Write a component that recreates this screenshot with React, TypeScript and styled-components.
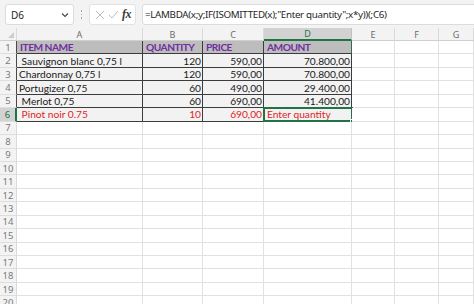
import React from 'react';
import styled, { createGlobalStyle } from 'styled-components';

const GlobalStyle = createGlobalStyle`
  html, body {
    margin: 0;
    padding: 0;
    background: #ffffff;
    overflow: hidden;
  }
  * {
    box-sizing: border-box;
  }
`;

const COLS = ['A', 'B', 'C', 'D', 'E', 'F', 'G'];
const COL_WIDTHS = '17px 126px 60px 61px 88px 43px 44px 1fr';
const ROW_H = 13.45;

type Row = { cells: string[]; kind: 'head' | 'data' | 'alert' };

const rows: Row[] = [
  { kind: 'head', cells: ['ITEM NAME', 'QUANTITY', 'PRICE', 'AMOUNT'] },
  { kind: 'data', cells: [' Sauvignon blanc 0,75 l', '120', '590,00', '70.800,00'] },
  { kind: 'data', cells: ['Chardonnay 0,75 l', '120', '590,00', '70.800,00'] },
  { kind: 'data', cells: ['Portugizer 0,75', '60', '490,00', '29.400,00'] },
  { kind: 'data', cells: [' Merlot 0,75', '60', '690,00', '41.400,00'] },
  { kind: 'alert', cells: [' Pinot noir 0.75', '10', '690,00', 'Enter quantity'] },
];

const Page = styled.div`
  width: 100%;
  height: 304px;
  display: flex;
  flex-direction: column;
  background: #f3f3f3;
`;

const FormulaBar = styled.div`
  height: 28px;
  flex: none;
  display: flex;
  align-items: center;
  padding: 1px 0 0 5px;
  font-family: 'Noto Sans', 'Open Sans', sans-serif;
  color: #262626;
`;

const NameBox = styled.div`
  width: 69px;
  height: 21px;
  background: #ffffff;
  border: 1px solid #dcdcdc;
  border-radius: 3px;
  display: flex;
  align-items: center;
  justify-content: space-between;
  padding: 0 4px 0 5px;
  font-size: 10px;
`;

const Grip = styled.div`
  width: 15px;
  display: flex;
  flex-direction: column;
  align-items: center;
  gap: 2px;

  span {
    width: 1.5px;
    height: 1.5px;
    border-radius: 50%;
    background: #9a9a9a;
  }
`;

const ActionBox = styled.div`
  width: 47px;
  height: 21px;
  background: #ffffff;
  border: 1px solid #e2e2e2;
  border-radius: 3px;
  display: flex;
  align-items: center;
  justify-content: space-between;
  padding: 0 4px 0 5px;
`;

const FxLabel = styled.span`
  font-family: 'Liberation Serif', 'DejaVu Serif', serif;
  font-style: italic;
  font-size: 12px;
  font-weight: bold;
  color: #3a3a3a;
  letter-spacing: -0.5px;
`;

const FormulaInput = styled.div`
  flex: 1;
  height: 21px;
  margin-left: 6px;
  margin-right: -4px;
  background: #ffffff;
  border: 1px solid #dcdcdc;
  border-radius: 3px 0 0 3px;
  display: flex;
  align-items: center;
  padding-left: 2px;
  font-size: 9.8px;
  letter-spacing: -0.32px;
  white-space: pre;
`;

const Sheet = styled.div`
  flex: 1;
  display: grid;
  grid-template-columns: ${COL_WIDTHS};
  grid-template-rows: 13px repeat(20, ${ROW_H}px);
  background: #ffffff;
  font-family: 'Lato', 'Open Sans', sans-serif;
  font-size: 10.2px;
  overflow: hidden;
`;

const Corner = styled.div`
  background: #f3f3f3;
  border-right: 1px solid #dadada;
  border-bottom: 1px solid #cfcfcf;
  display: flex;
  align-items: flex-end;
  justify-content: flex-end;
  padding: 0 2px 2px 0;

  &::after {
    content: '';
    width: 0;
    height: 0;
    border-left: 6px solid transparent;
    border-bottom: 6px solid #cdcdcd;
  }
`;

const ColHead = styled.div<{ $active?: boolean }>`
  background: ${(p) => (p.$active ? '#d2d2d2' : '#f3f3f3')};
  color: ${(p) => (p.$active ? '#217346' : '#6b6b6b')};
  border-right: 1px solid ${(p) => (p.$active ? '#c2c2c2' : '#dadada')};
  border-bottom: ${(p) => (p.$active ? '2px solid #217346' : '1px solid #cfcfcf')};
  font-family: 'Noto Sans', 'Open Sans', sans-serif;
  font-size: 9px;
  display: flex;
  align-items: center;
  justify-content: center;
`;

const RowHead = styled.div<{ $active?: boolean; $edge: string }>`
  background: ${(p) => (p.$active ? '#d2d2d2' : '#f3f3f3')};
  color: ${(p) => (p.$active ? '#217346' : '#7a7a7a')};
  border-right: ${(p) => (p.$active ? '2px' : '1px')} solid ${(p) => p.$edge};
  border-bottom: 1px solid #dedede;
  font-family: 'Noto Sans', 'Open Sans', sans-serif;
  font-size: 9.5px;
  display: flex;
  align-items: center;
  justify-content: center;
`;

const Cell = styled.div<{
  $fill: string;
  $color: string;
  $bold?: boolean;
  $right?: boolean;
  $line: string;
  $edge?: string;
  $inset?: number;
}>`
  position: relative;
  background: ${(p) => p.$fill};
  color: ${(p) => p.$color};
  font-weight: ${(p) => (p.$bold ? 700 : 400)};
  border-right: 1px solid ${(p) => p.$edge || p.$line};
  border-bottom: 1px solid ${(p) => p.$line};
  display: flex;
  align-items: center;
  justify-content: ${(p) => (p.$right ? 'flex-end' : 'flex-start')};
  padding: 0 1px 0 ${(p) => p.$inset ?? 2}px;
  white-space: pre;
  letter-spacing: ${(p) => (p.$bold ? '-0.5px' : '0')};
`;

const Selection = styled.div`
  position: absolute;
  inset: -1px -2px -1px -1px;
  border: 2px solid #217346;
  pointer-events: none;
`;

const Handle = styled.div`
  position: absolute;
  right: -4px;
  bottom: -4px;
  width: 5px;
  height: 5px;
  background: #217346;
  border: 1px solid #ffffff;
`;

const ChevronIcon = () => (
  <svg width="8" height="6" viewBox="0 0 8 6">
    <path d="M1 1.5 L4 4.5 L7 1.5" fill="none" stroke="#444" strokeWidth="1.1" />
  </svg>
);

const CrossIcon = () => (
  <svg width="10" height="10" viewBox="0 0 10 10">
    <path d="M1 1 L9 9 M9 1 L1 9" fill="none" stroke="#bdbdbd" strokeWidth="1" />
  </svg>
);

const CheckIcon = () => (
  <svg width="11" height="9" viewBox="0 0 11 9">
    <path d="M1 5 L4 8 L10 1" fill="none" stroke="#bdbdbd" strokeWidth="1" />
  </svg>
);

export default function App() {
  const gridRows = [];

  for (let r = 1; r <= 20; r++) {
    const row = rows[r - 1];
    const inTable = !!row;
    const active = r === 6;
    gridRows.push(
      <RowHead key={`rh${r}`} $active={active} $edge={active ? '#217346' : inTable ? '#4a4a4a' : '#dadada'}>
        {r}
      </RowHead>
    );
    COLS.forEach((c, ci) => {
      if (row && ci < 4) {
        const head = row.kind === 'head';
        const alert = row.kind === 'alert';
        const selected = alert && ci === 3;
        gridRows.push(
          <Cell
            key={c + r}
            $fill={head ? '#bdbdbd' : '#f2f2f2'}
            $color={head ? '#7030a0' : alert ? '#e02424' : '#1a1a1a'}
            $bold={head}
            $right={!head && ci > 0 && !selected}
            $line="#3c3c3c"
            $edge={head && ci === 3 ? '#2f6e48' : undefined}
            $inset={selected ? 3 : head ? 3 : 2}
          >
            {row.cells[ci]}
            {selected && (
              <Selection>
                <Handle />
              </Selection>
            )}
          </Cell>
        );
      } else {
        gridRows.push(<Cell key={c + r} $fill="#ffffff" $color="#1a1a1a" $line="#e1e1e1" />);
      }
    });
  }

  return (
    <>
      <GlobalStyle />
      <Page>
        <FormulaBar>
          <NameBox>
            <span>D6</span>
            <ChevronIcon />
          </NameBox>
          <Grip>
            <span />
            <span />
            <span />
          </Grip>
          <ActionBox>
            <CrossIcon />
            <CheckIcon />
            <FxLabel>fx</FxLabel>
          </ActionBox>
          <FormulaInput>=LAMBDA(x;y;IF(ISOMITTED(x);"Enter quantity";x*y))(;C6)</FormulaInput>
        </FormulaBar>
        <Sheet>
          <Corner />
          {COLS.map((c) => (
            <ColHead key={c} $active={c === 'D'}>
              {c}
            </ColHead>
          ))}
          {gridRows}
        </Sheet>
      </Page>
    </>
  );
}
